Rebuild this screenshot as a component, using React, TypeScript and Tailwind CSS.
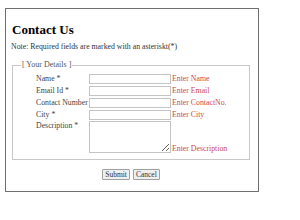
const FIELDS = [
  { label: "Name *", hint: "Enter Name" },
  { label: "Email Id *", hint: "Enter Email" },
  { label: "Contact Number", hint: "Enter ContactNo." },
  { label: "City *", hint: "Enter City" },
];

export default function App() {
  return (
    <div className="w-[300px] h-[220px] bg-white pt-[8px] pl-[5px] font-['Liberation_Serif','Times_New_Roman',serif] text-[#333]">
      <div className="w-[254px] h-[184px] border border-[#6f6f6f] pl-[5px] pr-[7px]">
        <h1 className="mt-[13px] ml-[1px] font-['Liberation_Serif','Times_New_Roman',serif] text-[13px] font-[700] leading-[15px] text-black">
          Contact Us
        </h1>
        <p className="mt-[5px] text-[7.8px] leading-[10px] text-[#333]">
          Note: Required fields are marked with an asteriskt(*)
        </p>

        <fieldset className="mt-[8px] ml-[1px] w-[238px] border border-[#c8c8c8] pl-[5px] pb-[6px]">
          <legend className="ml-[3px] px-[1px] text-[8px] leading-[10px] text-[#555]">
            [ Your Details ]
          </legend>
          <div className="mt-[3px] pl-[18px] flex flex-col">
            {FIELDS.map((f) => (
              <div key={f.label} className="flex h-[12px] items-center">
                <label className="w-[53px] text-[7.8px] leading-[10px] text-[#444] whitespace-nowrap">
                  {f.label}
                </label>
                <input
                  type="text"
                  className="w-[82px] h-[10px] border border-[#c4c4c4] bg-white outline-none"
                />
                <span className="ml-[1px] text-[7.8px] leading-[10px] text-[#cc4a4a] whitespace-nowrap">
                  {f.hint}
                </span>
              </div>
            ))}
            <div className="flex">
              <label className="w-[53px] text-[7.8px] leading-[10px] text-[#444] whitespace-nowrap">
                Description *
              </label>
              <textarea className="w-[82px] h-[32px] border border-[#c4c4c4] bg-white outline-none resize" />
              <span className="ml-[1px] self-end mb-[-1px] text-[7.8px] leading-[10px] text-[#cc4a4a] whitespace-nowrap">
                Enter Description
              </span>
            </div>
          </div>
        </fieldset>

        <div className="mt-[9px] flex justify-center gap-[3px]">
          <button
            type="button"
            className="h-[11px] px-[2px] border border-[#a0a0a0] bg-[#efefef] text-[7.5px] leading-[9px] text-[#333] rounded-[1px]"
          >
            Submit
          </button>
          <button
            type="button"
            className="h-[11px] px-[2px] border border-[#a0a0a0] bg-[#efefef] text-[7.5px] leading-[9px] text-[#333] rounded-[1px]"
          >
            Cancel
          </button>
        </div>
      </div>
    </div>
  );
}
